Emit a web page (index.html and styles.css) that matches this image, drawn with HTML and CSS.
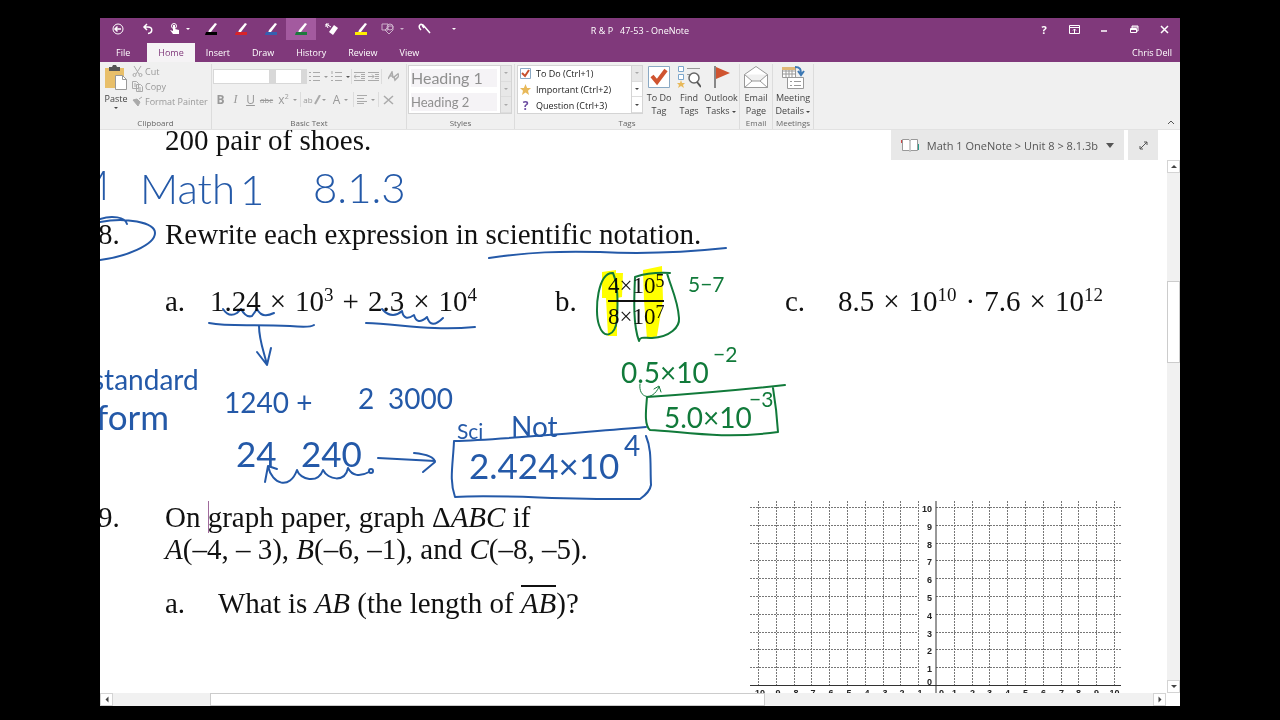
FILE: index.html
```html
<!DOCTYPE html>
<html lang="en">
<head>
    <meta charset="UTF-8">
    <meta name="viewport" content="width=device-width, initial-scale=1.0">
    <title>R &amp; P 47-53 - OneNote</title>
    <link rel="stylesheet" href="styles.css">
</head>
<body>
    <div class="window">
        <header class="titlebar">
            <div class="quick-access">
                <button class="qa" aria-label="Back"><svg width="12" height="12" viewBox="0 0 12 12"><circle cx="6" cy="6" r="5"/><path d="M9 6H3M5.500 3.500L3 6l2.500 2.500" stroke-width="1.500"/></svg></button>
                <button class="qa" aria-label="Undo"><svg width="12" height="12" viewBox="0 0 12 12"><path d="M5 1L2 4l3 3M2 4h4c5 0 5 6 0 6.500" stroke-width="1.500"/></svg></button>
                <button class="qa split" aria-label="Touch mode"><svg width="10" height="12" viewBox="0 0 10 12"><circle cx="4" cy="3" r="2.500"/><path class="solid" d="M3 2h2v4l4 1v4H3L0 7l3 1z"/></svg><i class="caret-down"></i></button>
                <button class="qa" aria-label="Black pen"><svg width="14" height="13" viewBox="0 0 14 13"><path class="solid" d="M11 0l2 1-6 8-3 1 1-3z"/><path class="ink-black" d="M2 9h11v3H1z"/></svg></button>
                <button class="qa" aria-label="Red pen"><svg width="14" height="13" viewBox="0 0 14 13"><path class="solid" d="M11 0l2 1-6 8-3 1 1-3z"/><path class="ink-red" d="M2 9h11v3H1z"/></svg></button>
                <button class="qa" aria-label="Blue pen"><svg width="14" height="13" viewBox="0 0 14 13"><path class="solid" d="M11 0l2 1-6 8-3 1 1-3z"/><path class="ink-blue" d="M2 9h11v3H1z"/></svg></button>
                <button class="qa selected" aria-label="Green pen"><svg width="14" height="13" viewBox="0 0 14 13"><path class="solid" d="M11 0l2 1-6 8-3 1 1-3z"/><path class="ink-green" d="M2 9h11v3H1z"/></svg></button>
                <button class="qa" aria-label="Eraser"><svg width="13" height="12" viewBox="0 0 13 12"><path d="M1 1l5 3M1 1l2 4M4 1H1v3"/><path class="solid" d="M9 2l4 3-5 7-4-3z"/></svg></button>
                <button class="qa" aria-label="Highlighter"><svg width="14" height="13" viewBox="0 0 14 13"><path class="solid" d="M11 0l2 1-6 8-3 1 1-3z"/><path class="ink-yellow" d="M1 9h12v3H1z"/></svg></button>
                <button class="qa split dim" aria-label="Shapes"><svg width="13" height="12" viewBox="0 0 13 12"><path d="M1 1h6v6H1zM8 3h4v4L8 11 4 7l2-2z"/><circle cx="9" cy="4" r="3"/></svg><i class="caret-down"></i></button>
                <button class="qa" aria-label="Lasso"><svg width="13" height="12" viewBox="0 0 13 12"><path d="M3 7C-1 3 3-1 6 3l6 7M4 2l2 3" stroke-width="1.500"/></svg></button>
                <button class="qa" aria-label="Customize"><i class="caret-down"></i></button>
            </div>
            <h1 class="window-title">R &amp; P &nbsp; 47-53 - OneNote</h1>
            <div class="window-controls">
                <button class="qa" aria-label="Help"><b>?</b></button>
                <button class="qa" aria-label="Ribbon options"><svg width="11" height="9" viewBox="0 0 11 9"><path d="M.5.5h10v8H.5zM.5 2.500h10M5.500 8V4M4 5.500L5.500 4 7 5.500"/></svg></button>
                <button class="qa" aria-label="Minimize"><svg width="8" height="9" viewBox="0 0 8 9"><path d="M1 6h6" stroke-width="1.500"/></svg></button>
                <button class="qa" aria-label="Restore"><svg width="9" height="9" viewBox="0 0 9 9"><path d="M.5 3.500h6v4h-6zM.5 4.500h6M2 3V1h6v5H7M2 2h6"/></svg></button>
                <button class="qa" aria-label="Close"><svg width="9" height="9" viewBox="0 0 9 9"><path d="M1 1l7 7M8 1L1 8" stroke-width="1.500"/></svg></button>
            </div>
        </header>

        <nav class="tabs">
            <a href="#file" class="tab file">File</a>
            <a href="#home" class="tab active">Home</a>
            <a href="#insert" class="tab">Insert</a>
            <a href="#draw" class="tab">Draw</a>
            <a href="#history" class="tab">History</a>
            <a href="#review" class="tab">Review</a>
            <a href="#view" class="tab">View</a>
            <span class="user">Chris Dell</span>
        </nav>

        <div class="ribbon">
            <section class="group clipboard">
                <div class="group-body">
                    <button class="big">
                        <svg width="24" height="25" viewBox="0 0 24 25"><path fill="#e8bf6a" d="M1 3h19v20H1z"/><path fill="#555" d="M5 2h3l1-2h3l1 2h3v4H5z"/><path fill="#fff" stroke="#999" d="M11.500 10.500h7l4 4v10h-11z"/><path fill="none" stroke="#999" d="M18.500 10.500v4h4"/></svg>
                        <span>Paste</span><i class="caret-down"></i>
                    </button>
                    <div class="clip-list">
                        <button class="small"><svg width="11" height="11" viewBox="0 0 11 11"><path d="M2 0l5 8M9 0L4 8"/><circle cx="2.500" cy="9" r="1.500"/><circle cx="8.500" cy="9" r="1.500"/></svg>Cut</button>
                        <button class="small"><svg width="11" height="11" viewBox="0 0 11 11"><path d="M.5.5h4l2 2v5h-6zM4.500 3.500h4l2 2v5h-6zM2 3h2M2 5h2M6 7h3M6 9h3"/></svg>Copy</button>
                        <button class="small"><svg width="11" height="11" viewBox="0 0 11 11"><path fill="#aaa" d="M1 4l4-1 3 3-2 4zM7 3l3-2"/></svg>Format Painter</button>
                    </div>
                </div>
                <h2>Clipboard</h2>
            </section>

            <section class="group basic-text">
                <div class="group-body text-tools">
                    <div class="tool-row">
                        <select class="font-name" aria-label="Font"><option></option></select>
                        <select class="font-size" aria-label="Font size"><option></option></select>
                        <button class="tool" aria-label="Bullets"><svg width="11" height="11" viewBox="0 0 11 11"><path d="M0 1.500h2M0 5.500h2M0 9.500h2M4 1.500h7M4 5.500h7M4 9.500h7"/></svg><i class="caret-down"></i></button>
                        <button class="tool" aria-label="Numbering"><svg width="11" height="11" viewBox="0 0 11 11"><path d="M1 0v3M0 5.500h2M0 9.500h2M4 1.500h7M4 5.500h7M4 9.500h7"/></svg><i class="caret-down dark"></i></button>
                        <button class="tool indent sep" aria-label="Decrease indent"><svg width="11" height="9" viewBox="0 0 11 9"><path d="M0 .5h11M7 2.500h4M7 4.500h4M7 6.500h4M0 8.500h11M0 4.500h6M2 2.500l-2 2 2 2"/></svg></button>
                        <button class="tool indent" aria-label="Increase indent"><svg width="11" height="9" viewBox="0 0 11 9"><path d="M0 .5h11M7 2.500h4M7 4.500h4M7 6.500h4M0 8.500h11M0 4.500h6M4 2.500l2 2-2 2"/></svg></button>
                        <button class="tool styles-btn sep" aria-label="Clear styles"><svg width="11" height="11" viewBox="0 0 11 11"><path d="M0 8l4-7 1 6M2 5h3M6 6l4-3 1 2-4 4z" stroke-width="1.500"/></svg></button>
                    </div>
                    <div class="tool-row second">
                        <button class="tool"><b>B</b></button>
                        <button class="tool serif"><em>I</em></button>
                        <button class="tool"><u>U</u></button>
                        <button class="tool tiny"><s>abc</s></button>
                        <button class="tool wide">x<sup>2</sup> <i class="caret-down"></i></button>
                        <button class="tool wide sep marker-btn"><span class="tiny">ab</span><svg width="7" height="10" viewBox="0 0 7 10"><path d="M6 0L1 9" stroke-width="2"/></svg><i class="caret-down"></i></button>
                        <button class="tool wide">A <i class="caret-down"></i></button>
                        <button class="tool wide sep" aria-label="Align"><svg width="10" height="9" viewBox="0 0 10 9"><path d="M0 .5h10M0 3.500h7M0 6.500h10M0 8.500h7"/></svg><i class="caret-down"></i></button>
                        <button class="tool sep" aria-label="Delete"><svg width="11" height="10" viewBox="0 0 11 10"><path d="M1 1l9 8M10 1L1 9" stroke-width="1.500"/></svg></button>
                    </div>
                </div>
                <h2>Basic Text</h2>
            </section>

            <section class="group styles">
                <div class="group-body">
                    <div class="gallery muted">
                        <div class="gallery-items">
                            <button class="heading-one">Heading 1</button>
                            <button class="heading-two">Heading 2</button>
                        </div>
                        <div class="spinner">
                            <button aria-label="Styles up"><i class="caret-down"></i></button>
                            <button aria-label="Styles down"><i class="caret-down"></i></button>
                            <button aria-label="More styles"><i class="caret-down"></i></button>
                        </div>
                    </div>
                </div>
                <h2>Styles</h2>
            </section>

            <section class="group tags">
                <div class="group-body">
                    <div class="gallery">
                        <div class="gallery-items">
                            <button class="tag-item"><svg width="11" height="11" viewBox="0 0 11 11"><path fill="#fff" stroke="#8aa9c4" d="M.5.5h10v10H.5z"/><path fill="none" stroke="#c8502d" stroke-width="2" d="M2 5l3 3 4-6"/></svg>To Do (Ctrl+1)</button>
                            <button class="tag-item"><svg width="11" height="11" viewBox="0 0 11 11"><path fill="#e8b95a" d="M5.500 0l1.600 3.900 3.900.2-3 2.600 1 4.300-3.500-2.400L2 11l1-4.300-3-2.600 3.900-.2z"/></svg>Important (Ctrl+2)</button>
                            <button class="tag-item"><b class="question">?</b>Question (Ctrl+3)</button>
                        </div>
                        <div class="spinner">
                            <button class="off" aria-label="Tags up"><i class="caret-down"></i></button>
                            <button aria-label="Tags down"><i class="caret-down"></i></button>
                            <button aria-label="More tags"><i class="caret-down"></i></button>
                        </div>
                    </div>
                    <button class="big">
                        <svg width="24" height="24" viewBox="0 0 24 24"><path fill="#fff" stroke="#8aa9c4" d="M1.500 1.500h21v21h-21z"/><path fill="none" stroke="#cf5430" stroke-width="4" d="M5 11l5 6 9-12"/></svg>
                        <span>To Do<br>Tag</span>
                    </button>
                    <button class="big find">
                        <svg width="24" height="24" viewBox="0 0 24 24"><path fill="#fff" stroke="#7da7cc" d="M1.500 1.500h5v5h-5zM1.500 9.500h5v5h-5z"/><path stroke="#999" d="M10 3.500h13M10 9.500h3"/><path fill="#e8b95a" d="M4 15l1 3h3l-2 2 1 3-3-2-3 2 1-3-2-2h3z"/><circle cx="17" cy="13" r="5" fill="#fff" stroke="#666" stroke-width="1.500"/><path stroke="#555" stroke-width="2" d="M20 17l4 5"/></svg>
                        <span>Find<br>Tags</span>
                    </button>
                    <button class="big outlook">
                        <svg width="24" height="24" viewBox="0 0 24 24"><path fill="#cf5430" d="M7 2l14 6-14 6z"/><path stroke="#666" stroke-width="1.500" d="M6 1v22"/></svg>
                        <span>Outlook<br>Tasks <i class="caret-down"></i></span>
                    </button>
                </div>
                <h2>Tags</h2>
            </section>

            <section class="group email">
                <div class="group-body">
                    <button class="big">
                        <svg width="24" height="24" viewBox="0 0 24 24"><path fill="#fff" stroke="#999" d="M.5 9.500l11.500-8 11.500 8v13H.5zM.5 9.500L8 16h8l7.500-6.500M.5 22.500L8 16M23.500 22.500L16 16"/></svg>
                        <span>Email<br>Page</span>
                    </button>
                </div>
                <h2>Email</h2>
            </section>

            <section class="group meetings">
                <div class="group-body">
                    <button class="big">
                        <svg width="24" height="24" viewBox="0 0 24 24"><path fill="#fff" stroke="#999" d="M1.500 2.500h13v10h-13zM1.500 6h13M1.500 9h13M5 5v8M8 5v8M11 5v8"/><path fill="#e0b878" d="M1 2h13v3H1z"/><path fill="none" stroke="#3c78b4" stroke-width="2" d="M14 2c5 0 6 2 6 7M17 6l3 4 3-4"/><path fill="#fff" stroke="#999" d="M6.500 12.500h16v11h-16zM9 16.500h2M13 16.500h7M9 20.500h2M13 20.500h7"/></svg>
                        <span>Meeting<br>Details <i class="caret-down"></i></span>
                    </button>
                </div>
                <h2>Meetings</h2>
            </section>
            <button class="collapse" aria-label="Collapse the ribbon"><svg width="8" height="5" viewBox="0 0 8 5"><path d="M1 4l3-3 3 3"/></svg></button>
        </div>

        <div class="workspace">
            <main class="page">
                <div class="problem">
                    <p class="line body">200 pair of shoes.</p>
                </div>
                <div class="problem eight">
                    <span class="line">8.</span>
                    <p class="line body">Rewrite each expression in scientific notation.</p>
                </div>
                <div class="parts">
                    <div class="part first"><span>a.</span><span class="math">1.24<i class="op">×</i>10<sup>3</sup><i class="op">+</i>2.3<i class="op">×</i>10<sup>4</sup></span></div>
                    <div class="part"><span>b.</span><span class="fraction"><span>4×10<sup>5</sup></span><span>8×10<sup>7</sup></span></span></div>
                    <div class="part"><span>c.</span><span class="math">8.5<i class="op">×</i>10<sup>10</sup><i class="dot">·</i>7.6<i class="op">×</i>10<sup>12</sup></span></div>
                </div>
                <div class="problem nine">
                    <span class="line">9.</span>
                    <div class="body">
                        <p class="line">On <span class="text-cursor"></span>graph paper, graph Δ<em>ABC</em> if</p>
                        <p class="line"><em>A</em>(–4, – 3), <em>B</em>(–6, –1), and <em>C</em>(–8, –5).</p>
                        <div class="part question-a"><span>a.</span><span>What is <em>AB</em> (the length of <em class="segment">AB</em>)?</span></div>
                    </div>
                    <svg class="graph" id="graph" width="372" height="210" viewBox="0 0 372 210" role="img" aria-label="Coordinate grid"></svg>
                </div>

                <!-- pen strokes on top of the page -->
                <svg class="ink" viewBox="100 130 1067 563">
                    <g class="marker">
                        <path d="M602 272l14-2v3h7l-1 24-5 1v38h-9l-2-38h-4z"/>
                        <path d="M643 270l19-4 1 34-6 36-10 3-3-39z"/>
                    </g>
                    <g class="blue">
                        <path d="M100 219C112 215 125 217 127 224M100 222C125 217 155 222 155 233C155 245 125 257 100 260"/>
                        <path d="M489 258C530 252 560 251 600 252Q660 255 726 248"/>
                        <path d="M223 309Q229 318 237 313L241 309Q246 318 252 316L257 309Q262 319 274 313"/>
                        <path d="M382 309Q392 320 402 311Q404 322 414 315Q417 326 427 317Q431 330 443 318"/>
                        <path d="M209 323C230 327 250 324 290 326Q310 328 314 325M366 323C400 324 430 331 475 327"/>
                        <path d="M259 326C259 340 264 352 267 365M257 352l10 13 4-17"/>
                        <path d="M378 458l57 3M414 453Q434 455 435 462L423 472"/>
                        <path d="M265 482l3-16 9 3M268 466C272 485 290 490 297 470C300 480 318 484 323 470C328 480 345 483 348 468C352 476 360 477 369 472"/>
                        <circle cx="371" cy="471" r="2"/>
                        <path d="M454 441C500 440 560 434 646 427M454 441C453 465 449 480 455 497C500 494 560 500 640 499Q650 492 651 485C650 465 652 450 646 436"/>
                        <text class="xl" x="71" y="200">M</text>
                        <text class="xl" x="140" y="204">Math</text>
                        <text class="xl" x="240" y="205">1</text>
                        <text class="xl" x="313" y="203">8.1.3</text>
                        <text class="md" x="92" y="390">standard</text>
                        <text class="lg" x="96" y="430">form</text>
                        <text class="md" x="224" y="413">1240 +</text>
                        <text class="md" x="358" y="409">2</text>
                        <text class="md" x="388" y="409">3000</text>
                        <text class="lg" x="236" y="467">24</text>
                        <text class="lg" x="301" y="467">240</text>
                        <text class="sm" x="457" y="439">Sci</text>
                        <text class="md" x="511" y="437">Not</text>
                        <text class="lg" x="469" y="479">2.424×10</text>
                        <text class="md" x="624" y="456">4</text>
                    </g>
                    <g class="green">
                        <path d="M613 273C598 272 594 310 599 325C604 340 615 336 617 320C618 300 618 285 613 273"/>
                        <path d="M635 277Q650 272 670 273M635 277C634 300 633 325 639 341C640 336 645 338 652 338C670 337 680 327 679 318C678 300 670 285 667 273"/>
                        <path class="thin" d="M640 384C638 398 652 402 659 387M654 389l5-3 2 6"/>
                        <path d="M647 397C690 394 730 391 785 385M647 397C646 410 644 425 650 430C680 431 720 440 778 432C777 415 775 400 773 388"/>
                        <text class="sm" x="688" y="292">5−7</text>
                        <text class="md" x="621" y="383">0.5×10</text>
                        <text class="sm" x="713" y="362">−2</text>
                        <text class="md" x="664" y="428">5.0×10</text>
                        <text class="sm" x="749" y="407">−3</text>
                    </g>
                </svg>

                <div class="location">
                    <button class="crumbs"><svg width="18" height="14" viewBox="0 0 18 14"><path fill="#fff" stroke="#999" d="M1.500 1.500H8l1 1 1-1h6.500v11H10l-1 1-1-1H1.500zM9 2v11"/><path stroke="#c44" d="M.5 2v3"/><path stroke="#2a9a8a" d="M17.500 6v6"/></svg>Math 1 OneNote &gt; Unit 8 &gt; 8.1.3b<i class="caret-down"></i></button>
                    <button class="expand" aria-label="Full page view"><svg width="9" height="9" viewBox="0 0 9 9"><path d="M1 8l7-7M5 1h3v3M1 5v3h3"/></svg></button>
                </div>
            </main>
            <div class="vscroll">
                <button aria-label="Scroll up"><i class="caret-down up"></i></button>
                <div class="vtrack"><div class="vthumb"></div></div>
                <button aria-label="Scroll down"><i class="caret-down"></i></button>
            </div>
        </div>
        <div class="hscroll">
            <button aria-label="Scroll left"><i class="caret-down left"></i></button>
            <div class="htrack"><div class="hthumb"></div></div>
            <button aria-label="Scroll right"><i class="caret-down right"></i></button>
        </div>
    </div>

    <script>
        // coordinate grid: one unit is 17.8px, origin at (186, 184)
        const unit = 17.8, ox = 186, oy = 184;
        let marks = '';

        for (let n = -10; n <= 10; n++) {
            const x = Math.round(ox + n * unit) + 0.5;
            if (n !== 0) {
                marks += `<line class="dots" x1="${x}" y1="0" x2="${x}" y2="${oy}"/>`;
            }
            marks += `<text x="${n === 0 ? x + 5 : x}" y="195" text-anchor="middle">${n}</text>`;
        }
        for (let n = 0; n <= 10; n++) {
            const y = Math.round(oy - n * unit) + 0.5;
            if (n !== 0) {
                marks += `<line class="dots" x1="0" y1="${y}" x2="168" y2="${y}"/>`;
                marks += `<line class="dots" x1="${ox}" y1="${y}" x2="371" y2="${y}"/>`;
            }
            marks += `<text x="182" y="${n === 0 ? y - 1 : y + 4}" text-anchor="end">${n}</text>`;
        }
        marks += `<line x1="0" y1="${oy + 0.5}" x2="371" y2="${oy + 0.5}"/>`;
        marks += `<line x1="${ox}" y1="0" x2="${ox}" y2="210"/>`;
        document.getElementById('graph').innerHTML = marks;
    </script>
</body>
</html>
```
FILE: styles.css
```css
* {
    box-sizing: border-box;
}
body {
    margin: 0;
    padding: 18px 100px 14px;
    height: 100vh;
    background: #000;
    font-family: "Open Sans", "Noto Sans", sans-serif;
    font-size: 9px;
    color: #444;
    overflow: hidden;
}
button {
    font: inherit;
    color: inherit;
    background: none;
    border: 0;
    padding: 0;
    margin: 0;
}
svg {
    flex: none;
}
p, h1, h2 {
    margin: 0;
    font-weight: 400;
}
.window {
    display: flex;
    flex-direction: column;
    height: 100%;
    background: #fff;
    overflow: hidden;
}
.caret-down {
    display: inline-block;
    flex: none;
    border: 2px solid transparent;
    border-top-color: currentColor;
    border-bottom: 0;
    vertical-align: middle;
}

/* title bar */
.titlebar {
    display: grid;
    grid-template-columns: 1fr auto 1fr;
    height: 25px;
    flex: none;
    background: #80397b;
    color: #fff;
}
.quick-access {
    display: flex;
    padding-left: 3px;
}
.qa {
    display: flex;
    align-items: center;
    justify-content: center;
    width: 30px;
    height: 22px;
    font-size: 11px;
}
.qa svg {
    fill: none;
    stroke: #fff;
}
.qa .solid {
    fill: #fff;
    stroke: none;
}
.qa.split {
    width: 33px;
    gap: 6px;
}
.qa.dim {
    opacity: 0.6;
}
.qa.selected {
    background: #a35a9f;
}
.qa .ink-black { fill: #000; stroke: none; }
.qa .ink-red { fill: #d8232a; stroke: none; }
.qa .ink-blue { fill: #3560b0; stroke: none; }
.qa .ink-green { fill: #1d7a3e; stroke: none; }
.qa .ink-yellow { fill: #ffee00; stroke: none; }
.window-title {
    font-size: 9px;
    line-height: 26px;
}
.window-controls {
    display: flex;
    justify-content: flex-end;
    padding-right: 1px;
}

/* tabs */
.tabs {
    display: flex;
    height: 19px;
    flex: none;
    background: #80397b;
    color: #fff;
    line-height: 20px;
}
.tab {
    padding: 0 11px;
    color: inherit;
    text-decoration: none;
}
.tab.file {
    padding: 0 17px 0 16px;
}
.tab.active {
    background: #f5f3f5;
    color: #80397b;
}
.user {
    margin-left: auto;
    padding-right: 8px;
}

/* ribbon */
.ribbon {
    display: flex;
    height: 68px;
    flex: none;
    padding-top: 2px;
    background: #f0f0f0;
    border-bottom: 1px solid #e2e2e2;
}
.group {
    display: flex;
    flex-direction: column;
    border-right: 1px solid #dcdcdc;
}
.group-body {
    display: flex;
    flex: 1;
}
.group h2 {
    font-size: 8px;
    line-height: 12px;
    text-align: center;
    color: #666;
}
.clipboard { width: 112px; }
.basic-text { width: 195px; }
.styles { width: 108px; }
.tags { width: 225px; }
.email { width: 33px; }
.meetings { width: 41px; }
.big {
    display: flex;
    flex-direction: column;
    align-items: center;
    width: 32px;
    padding-top: 1px;
    line-height: 13px;
    gap: 2px;
}
.big span {
    white-space: nowrap;
}
.big.find {
    width: 28px;
}
.big.outlook {
    width: 36px;
}
.email .big, .meetings .big {
    width: 100%;
}
.clip-list {
    display: flex;
    flex-direction: column;
    color: #999;
}
.small {
    display: flex;
    align-items: center;
    gap: 2px;
    height: 15px;
    white-space: nowrap;
}
.small svg {
    fill: none;
    stroke: #aaa;
}
.text-tools {
    flex-direction: column;
    gap: 8px;
    padding: 5px 0 0 1px;
    color: #999;
}
.tool-row {
    display: flex;
    align-items: center;
    height: 15px;
}
.tool-row select {
    appearance: none;
    height: 15px;
    border: 1px solid #d8d8d8;
    border-right-width: 6px;
    border-radius: 0;
    background: #fff;
    padding: 0;
}
.font-name { width: 62px; }
.font-size { width: 32px; }
.tool {
    display: flex;
    align-items: center;
    justify-content: center;
    gap: 4px;
    width: 22px;
    height: 15px;
    font-size: 12px;
}
.tool svg {
    fill: none;
    stroke: #aaa;
}
.tool .dark {
    color: #555;
}
.tool.indent {
    width: 15px;
}
.tool.styles-btn {
    width: 24px;
}
.serif {
    font-family: "Liberation Serif", serif;
}
.second .tool {
    width: 15px;
}
.second .tool.tiny {
    width: 17px;
}
.second .tool.wide {
    width: 25px;
}
.second .tool.marker-btn {
    width: 28px;
    gap: 1px;
}
.tool sup {
    font-size: 7px;
    line-height: 7px;
    margin: -6px 0 0 -4px;
}
.tool.sep {
    border-left: 1px solid #dcdcdc;
}
.second .tool.sep:last-child {
    width: 20px;
}
.tool.tiny, .tiny {
    font-size: 8px;
}
.gallery {
    display: flex;
    width: 126px;
    height: 49px;
    margin: 1px 0 0 2px;
    background: #fff;
    border: 1px solid #d4d4d4;
}
.gallery-items {
    display: flex;
    flex-direction: column;
    flex: 1;
}
.gallery.muted {
    width: 104px;
    margin-left: 1px;
}
.muted .gallery-items {
    gap: 6px;
    padding: 3px 3px 3px 2px;
    color: #8f8f8f;
    font-family: Lato, sans-serif;
}
.muted .gallery-items button {
    height: 18px;
    text-align: left;
    line-height: 18px;
    background: #f5f3f6;
}
.heading-one { font-size: 16px; }
.heading-two { font-size: 13px; }
.spinner {
    display: flex;
    flex-direction: column;
    width: 11px;
    border-left: 1px solid #d4d4d4;
}
.spinner button {
    display: flex;
    align-items: center;
    justify-content: center;
    flex: 1;
    border-bottom: 1px solid #ddd;
}
.spinner .off, .muted .spinner {
    background: #e8e8e8;
    color: #aaa;
}
.tag-item {
    display: flex;
    align-items: center;
    gap: 5px;
    height: 16px;
    padding-left: 2px;
    color: #222;
    white-space: nowrap;
}
.question {
    width: 11px;
    font-size: 12px;
    text-align: center;
    color: #6b4ba0;
}
.collapse {
    align-self: flex-end;
    margin: 0 5px 1px auto;
}
.collapse svg {
    fill: none;
    stroke: #555;
}

/* page */
.workspace {
    display: flex;
    flex: 1;
    min-height: 0;
}
.page {
    position: relative;
    flex: 1;
    min-width: 0;
    overflow: hidden;
    font-family: "Liberation Serif", serif;
    font-size: 29px;
    line-height: 32px;
    color: #111;
    white-space: nowrap;
}
.problem {
    display: grid;
    grid-template-columns: 67px 585px auto;
    justify-content: start;
    margin: 0 0 0 -2px;
}
.body {
    grid-column: 2;
}
.problem:first-child {
    margin-top: -6px;
}
.eight {
    margin-top: 62px;
}
.parts {
    display: grid;
    grid-template-columns: 390px 230px auto;
    justify-content: start;
    align-items: center;
    height: 80px;
    margin: 11px 0 0 65px;
}
.part {
    display: grid;
    grid-template-columns: 53px auto;
    justify-content: start;
    align-items: center;
}
.part.first {
    grid-template-columns: 45px auto;
}
.math sup, .fraction sup {
    font-size: 19px;
    line-height: 0;
    vertical-align: 10px;
}
.op, .dot {
    font-style: normal;
    margin: 0 9px;
}
.fraction {
    display: grid;
    font-size: 23px;
    line-height: 29px;
}
.fraction sup {
    font-size: 18px;
    vertical-align: 6px;
}
.fraction span:first-child {
    border-bottom: 2px solid #111;
}
.nine {
    margin-top: 160px;
}
.text-cursor {
    display: inline-block;
    width: 1px;
    height: 32px;
    margin-right: -1px;
    background: #a06a9c;
    vertical-align: top;
}
.question-a {
    margin-top: 22px;
}
.segment {
    border-top: 2px solid #111;
}
.graph {
    display: block;
    font: bold 9px "Liberation Sans", sans-serif;
    fill: #222;
}
.graph line {
    stroke: #333;
    stroke-width: 1;
}
.graph .dots {
    stroke: #777;
    stroke-dasharray: 2 1;
}

.ink {
    position: absolute;
    top: 0;
    left: 0;
    width: 1067px;
    height: 563px;
    font-family: Lato, sans-serif;
    pointer-events: none;
    mix-blend-mode: multiply;
}
.ink path, .ink circle {
    fill: none;
    stroke-width: 2;
    stroke-linecap: round;
    stroke-linejoin: round;
}
.ink .thin {
    stroke-width: 1;
}
.ink .marker path {
    fill: #ffff00;
}
.blue path, .blue circle { stroke: #2459a8; }
.blue text { fill: #2459a8; }
.green path { stroke: #117a3a; }
.green text { fill: #117a3a; }
.ink .sm { font-size: 21px; }
.ink .md { font-size: 28px; }
.ink .lg { font-size: 35px; }
.ink .xl { font-size: 42px; font-weight: 300; }

.location {
    position: absolute;
    top: 0;
    right: 9px;
    display: flex;
    gap: 4px;
    height: 30px;
    font: 11px "Open Sans", sans-serif;
    color: #555;
}
.crumbs {
    display: flex;
    align-items: center;
    gap: 8px;
    padding: 0 10px;
    background: #e8e8e8;
}
.crumbs .caret-down {
    border-width: 5px 4px 0;
}
.expand {
    width: 30px;
    background: #e8e8e8;
}
.expand svg {
    fill: none;
    stroke: #555;
}

/* scroll bars */
.vscroll {
    display: flex;
    flex-direction: column;
    width: 13px;
    padding-top: 30px;
}
.vscroll button, .hscroll button {
    display: flex;
    align-items: center;
    justify-content: center;
    width: 13px;
    height: 13px;
    border: 1px solid #d4d4d4;
    background: #fff;
}
.vscroll .caret-down, .hscroll .caret-down {
    border-width: 3px 3px 0;
}
.up { transform: rotate(180deg); }
.left { transform: rotate(90deg); }
.right { transform: rotate(-90deg); }
.vtrack {
    flex: 1;
    padding-top: 108px;
    background: #f1f1f1;
}
.vthumb {
    height: 82px;
    background: #fff;
    border: 1px solid #ccc;
}
.hscroll {
    display: flex;
    height: 13px;
    flex: none;
    padding-right: 14px;
}
.htrack {
    flex: 1;
    padding-left: 97px;
    background: #f1f1f1;
}
.hthumb {
    width: 555px;
    height: 13px;
    background: #fff;
    border: 1px solid #ccc;
}
```
